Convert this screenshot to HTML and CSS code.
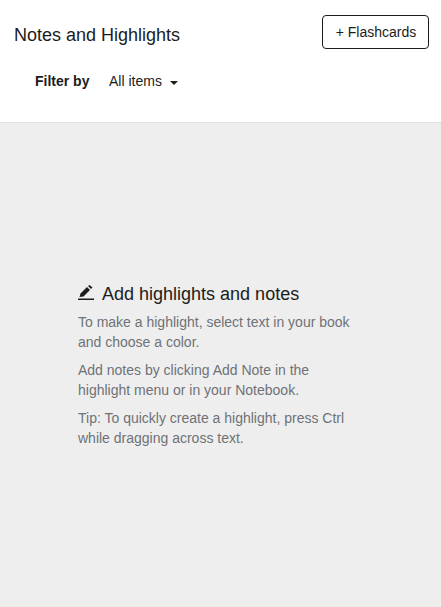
FILE: index.html
```html
<!DOCTYPE html>
<html lang="en">
<head>
<meta charset="utf-8">
<title>Notes and Highlights</title>
<link rel="stylesheet" href="styles.css">
</head>
<body>
<div class="app">
  <header class="head">
    <div class="title-row">
      <h1 class="title">Notes and Highlights</h1>
      <button class="flash">+ Flashcards</button>
    </div>
    <div class="filter-row">
      <span class="filter-label">Filter by</span>
      <span class="filter-value">All items</span>
      <span class="caret"></span>
    </div>
  </header>
  <main class="empty">
    <div class="empty-inner">
      <h2 class="empty-title">
        <svg class="pen" width="17" height="16" viewBox="0 0 17 16"><path d="M0 13.500h16V15H0z" fill="#1c1c1c"/><path d="M1.500 12 2.500 8.500 9 2l3 3-6.500 6.500z" fill="#1c1c1c"/><path d="M10 1 11.500 0 14.500 2.500 13 4z" fill="#1c1c1c"/></svg>
        <span>Add highlights and notes</span>
      </h2>
      <p class="para">To make a highlight, select text in your book and choose a color.</p>
      <p class="para">Add notes by clicking Add Note in the highlight menu or in your Notebook.</p>
      <p class="para">Tip: To quickly create a highlight, press Ctrl while dragging across text.</p>
    </div>
  </main>
</div>
</body>
</html>
```
FILE: styles.css
```css
html, body { margin: 0; height: 100%; }
body { font-family: "Liberation Sans", Arial, sans-serif; color: #1c1c1c; }
.app { height: 607px; display: flex; flex-direction: column; overflow: hidden; }
.head { height: 123px; box-sizing: border-box; border-bottom: 1px solid #e0e0e0; background: #fff; }
.title-row { display: flex; justify-content: space-between; align-items: flex-start; padding: 15px 12px 0 14px; }
.title { margin: 9px 0 0; font-size: 18px; line-height: 22px; font-weight: 400; }
.flash { width: 107px; height: 34px; box-sizing: border-box; background: #fff; border: 1px solid #1c1c1c; border-radius: 4px; font: 14px "Liberation Sans", Arial, sans-serif; color: #1c1c1c; padding: 0 0 0 1px; }
.filter-row { display: flex; align-items: center; padding: 23px 0 0 35px; font-size: 14px; line-height: 18px; }
.filter-label { font-weight: 700; width: 74px; }
.caret { margin: 3px 0 0 8px; border: 4px solid transparent; border-top-color: #1c1c1c; border-bottom: 0; }
.empty { flex: 1; background: #eeeeee; padding: 160px 0 0 78px; }
.empty-inner { width: 285px; }
.empty-title { display: flex; align-items: center; margin: 0 0 7px; font-size: 18px; line-height: 22px; font-weight: 400; }
.pen { margin-right: 7px; margin-top: -3px; }
.para { margin: 0 0 8px; font-size: 14px; line-height: 20px; color: #6f7277; }
```
